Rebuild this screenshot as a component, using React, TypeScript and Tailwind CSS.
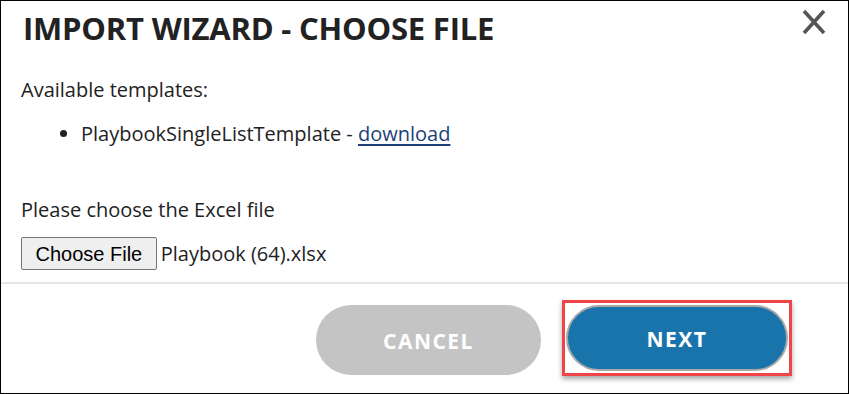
import React from 'react';

const App: React.FC = () => {
  return (
    <div className="w-[849px] h-[394px] bg-white border border-black flex flex-col font-['Open_Sans',sans-serif] text-[#222]">
      <div className="flex items-start justify-between pl-[22px] pr-[18px] pt-[7px] h-[62px]">
        <h1 className="text-[31px] font-bold leading-[40px] text-[#222] tracking-[-0.2px]">IMPORT WIZARD - CHOOSE FILE</h1>
        <button className="mt-[-2px] w-[32px] h-[32px] flex items-center justify-center">
          <svg width="24" height="26" viewBox="0 0 24 26">
            <path d="M2 2 L22 24 M22 2 L2 24" stroke="#555" strokeWidth="3.6" strokeLinecap="butt" />
          </svg>
        </button>
      </div>

      <div className="pl-[20px] text-[20px] leading-[26px] text-[#222]">
        <p className="mt-[14px]">Available templates:</p>
        <ul className="mt-[18px] pl-[60px] list-disc">
          <li>
            PlaybookSingleListTemplate -{' '}
            <a href="#" className="text-[#1c3f78] underline underline-offset-[3px]">download</a>
          </li>
        </ul>
        <p className="mt-[50px]">Please choose the Excel file</p>
        <div className="mt-[14px] flex items-center">
          <button className="h-[33px] px-[13.5px] bg-[#efefef] border border-[#767676] rounded-[2px] font-['Liberation_Sans',sans-serif] text-[20px] text-black">
            Choose File
          </button>
          <span className="ml-[4px]">Playbook (64).xlsx</span>
        </div>
      </div>

      <div className="mt-[12px] h-[2px] bg-[#e6e6e6]" />

      <div className="flex-1 flex items-start justify-end pr-[56px] pt-[16px] gap-[21px]">
        <button className="mt-[5px] w-[225px] h-[70px] pt-[3px] rounded-full bg-[#c4c4c4] text-white font-bold text-[21px] tracking-[1.5px]">
          CANCEL
        </button>
        <div className="border-[3px] border-[#f04448] px-[1px] py-[2px] shadow-[0_3px_5px_rgba(0,0,0,0.35)]">
          <button className="w-[222px] h-[66px] pt-[4px] rounded-full bg-[#1a74ac] border-2 border-[#a8a8a8] text-white font-bold text-[21px] tracking-[1.5px]">
            NEXT
          </button>
        </div>
      </div>
    </div>
  );
};

export default App;
